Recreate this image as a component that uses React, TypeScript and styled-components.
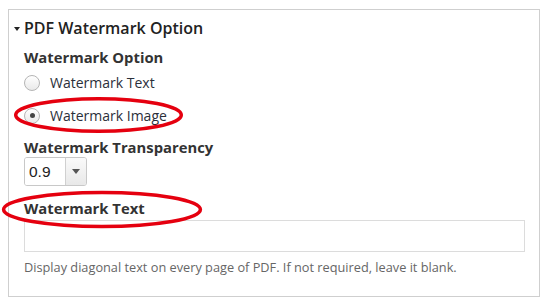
import { createGlobalStyle, styled } from "styled-components";

const GlobalStyle = createGlobalStyle`
  html, body {
    margin: 0;
    padding: 0;
    background: #fff;
  }
  body {
    font-family: "Open Sans", "Liberation Sans", sans-serif;
    color: #333;
  }
`;

const Page = styled.div`
  position: relative;
  width: 548px;
  height: 306px;
  padding: 9px 8px;
  box-sizing: border-box;
`;

const Panel = styled.div`
  width: 532px;
  height: 288px;
  box-sizing: border-box;
  border: 1px solid #cfcfcf;
  padding: 8px 14px 0 15px;
  display: flex;
  flex-direction: column;
`;

const Title = styled.div`
  display: flex;
  align-items: center;
  gap: 4px;
  margin-left: -10px;
  font-size: 16px;
  font-weight: 600;
  line-height: 20px;
  color: #222;
`;

const Caret = styled.span`
  width: 0;
  height: 0;
  border-left: 3.5px solid transparent;
  border-right: 3.5px solid transparent;
  border-top: 4px solid #222;
  margin-top: 2px;
`;

const Label = styled.div<{ $gap: number }>`
  margin-top: ${(p) => p.$gap}px;
  font-size: 14.8px;
  font-weight: 700;
  line-height: 20px;
  color: #333;
`;

const RadioList = styled.div`
  display: flex;
  flex-direction: column;
  margin-top: -1px;
`;

const RadioRow = styled.label`
  display: flex;
  align-items: center;
  gap: 10px;
  height: 33px;
  font-size: 14px;
  line-height: 20px;
  color: #2b2f3a;
`;

const RadioDot = styled.span<{ $checked?: boolean }>`
  width: 16px;
  height: 16px;
  box-sizing: border-box;
  border-radius: 50%;
  border: 1px solid #b5b5b5;
  background: linear-gradient(#ffffff, #e9e9e9);
  display: flex;
  align-items: center;
  justify-content: center;
  &::after {
    content: "";
    width: 5px;
    height: 5px;
    border-radius: 50%;
    background: ${(p) => (p.$checked ? "#444" : "transparent")};
  }
`;

const Select = styled.div`
  width: 63px;
  height: 29px;
  box-sizing: border-box;
  border: 1px solid #c8c8c8;
  border-radius: 3px;
  display: flex;
  overflow: hidden;
`;

const SelectValue = styled.div`
  width: 36px;
  display: flex;
  align-items: center;
  padding-left: 4px;
  font-family: "Liberation Sans", Arial, sans-serif;
  font-size: 15.5px;
  color: #222;
  background: #fff;
`;

const SelectArrow = styled.div`
  flex: 1;
  border-left: 1px solid #d0d0d0;
  background: linear-gradient(#fafafa, #e8e8e8);
  display: flex;
  align-items: center;
  justify-content: center;
  &::after {
    content: "";
    border-left: 4px solid transparent;
    border-right: 4px solid transparent;
    border-top: 5px solid #555;
  }
`;

const TextInput = styled.input`
  margin-top: 2px;
  width: 501px;
  height: 32px;
  box-sizing: border-box;
  border: 1px solid #dcdcdc;
  border-radius: 0;
  padding: 0 6px;
  font-family: inherit;
  font-size: 14px;
  outline: none;
`;

const Help = styled.div`
  margin-top: 6px;
  font-size: 12.75px;
  line-height: 18px;
  color: #666;
`;

const Marks = styled.svg`
  position: absolute;
  left: 0;
  top: 0;
  pointer-events: none;
`;

export default function App() {
  return (
    <>
      <GlobalStyle />
      <Page>
        <Panel>
          <Title>
            <Caret />
            PDF Watermark Option
          </Title>
          <Label $gap={9}>Watermark Option</Label>
          <RadioList>
            <RadioRow>
              <RadioDot />
              Watermark Text
            </RadioRow>
            <RadioRow>
              <RadioDot $checked />
              Watermark Image
            </RadioRow>
          </RadioList>
          <Label $gap={5}>Watermark Transparency</Label>
          <Select>
            <SelectValue>0.9</SelectValue>
            <SelectArrow />
          </Select>
          <Label $gap={12}>Watermark Text</Label>
          <TextInput type="text" />
          <Help>
            Display diagonal text on every page of PDF. If not required, leave it blank.
          </Help>
        </Panel>
        <Marks width="548" height="306" viewBox="0 0 548 306">
          <ellipse cx="98.5" cy="115" rx="82.8" ry="16.3" fill="none" stroke="#e5000f" strokeWidth="3.5" />
          <ellipse cx="102" cy="209.5" rx="98.4" ry="17" fill="none" stroke="#e5000f" strokeWidth="3.5" />
        </Marks>
      </Page>
    </>
  );
}
